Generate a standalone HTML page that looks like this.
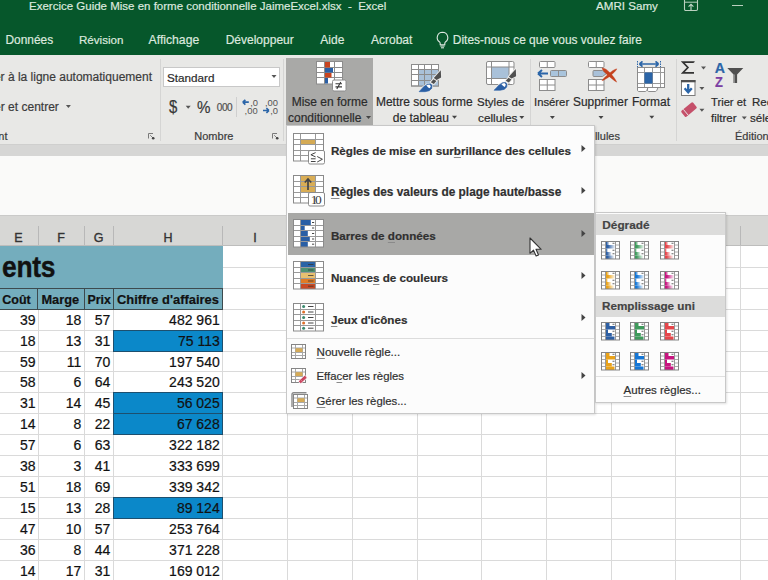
<!DOCTYPE html><html><head><meta charset="utf-8"><style>
html,body{margin:0;padding:0;}
body{width:768px;height:580px;overflow:hidden;position:relative;background:#fafaf9;font-family:"Liberation Sans", sans-serif;}
u{text-decoration:underline;text-decoration-thickness:1px;text-underline-offset:2px;text-decoration-color:#8a8a8a;}
.t{position:absolute;white-space:pre;-webkit-text-stroke:0.2px currentColor;}
</style></head><body><div style="position:absolute;left:0px;top:0px;width:768px;height:55px;background:#06572b"></div><div class="t" style="left:29px;top:1.41px;font-size:11.5px;line-height:11.5px;font-weight:400;color:#dce8df;">Exercice Guide Mise en forme conditionnelle JaimeExcel.xlsx  -  Excel</div><div class="t" style="left:596px;top:0.40px;font-size:11.6px;line-height:11.6px;font-weight:400;color:#dce8df;">AMRI Samy</div><svg style="position:absolute;left:683px;top:0px;" width="16" height="12" viewBox="0 0 16 12"><rect x="1.5" y="-2" width="13" height="12.5" rx="1.2" fill="none" stroke="#b9d0bf" stroke-width="1.1"/><line x1="1.5" y1="2.2" x2="14.5" y2="2.2" stroke="#b9d0bf"/><path d="M8 10.5V4.3M5.6 6.6L8 4.2L10.4 6.6" fill="none" stroke="#c8dacd" stroke-width="1.1"/></svg><div style="position:absolute;left:732px;top:5px;width:11px;height:1.2px;background:#b9d0bf"></div><div class="t" style="left:5.5px;top:35.31px;font-size:11.9px;line-height:11.9px;font-weight:400;color:#dce8df;">Données</div><div class="t" style="left:79px;top:34.31px;font-size:11.6px;line-height:11.6px;font-weight:400;color:#dce8df;">Révision</div><div class="t" style="left:148.6px;top:34.30px;font-size:12.2px;line-height:12.2px;font-weight:400;color:#dce8df;">Affichage</div><div class="t" style="left:225.7px;top:34.32px;font-size:12px;line-height:12px;font-weight:400;color:#dce8df;">Développeur</div><div class="t" style="left:320.3px;top:34.32px;font-size:12px;line-height:12px;font-weight:400;color:#dce8df;">Aide</div><div class="t" style="left:371px;top:34.32px;font-size:12px;line-height:12px;font-weight:400;color:#dce8df;">Acrobat</div><svg style="position:absolute;left:435px;top:31px;" width="15" height="18" viewBox="0 0 15 18"><path d="M7.5 1.2a5.3 5.3 0 0 0-3.2 9.5c.6.5.9 1.1.9 1.8v1.3h4.6v-1.3c0-.7.3-1.3.9-1.8a5.3 5.3 0 0 0-3.2-9.5z" fill="none" stroke="#dfe9e2" stroke-width="1.1"/><line x1="5.3" y1="15" x2="9.7" y2="15" stroke="#dfe9e2" stroke-width="1.1"/><line x1="6" y1="16.8" x2="9" y2="16.8" stroke="#dfe9e2" stroke-width="1.1"/></svg><div class="t" style="left:452.8px;top:35.31px;font-size:11.95px;line-height:11.95px;font-weight:400;color:#dce8df;">Dites-nous ce que vous voulez faire</div><div style="position:absolute;left:0px;top:55px;width:768px;height:89px;background:#e8e8e6"></div><div style="position:absolute;left:0px;top:144px;width:768px;height:1px;background:#cfcfce"></div><div style="position:absolute;left:0px;top:145px;width:768px;height:11px;background:#d6d6d5"></div><div class="t" style="right:616px;top:71.32px;font-size:12px;line-height:12px;font-weight:400;color:#3b3b3b;">Renvoyer à la ligne automatiquement</div><div class="t" style="right:709.2px;top:100.82px;font-size:12px;line-height:12px;font-weight:400;color:#3b3b3b;">Fusionner et centrer</div><svg style="position:absolute;left:65px;top:104px;" width="7" height="5" viewBox="0 0 7 5"><path d="M0.90 1.10h5l-2.5 3z" fill="#555"/></svg><div class="t" style="right:760.5px;top:130.50px;font-size:11px;line-height:11px;font-weight:400;color:#3b3b3b;">Alignement</div><svg style="position:absolute;left:147px;top:132px;" width="8" height="8" viewBox="0 0 8 8"><path d="M1.5 6.5V1.5H6" fill="none" stroke="#7a7a7a" stroke-width="1"/><path d="M3.2 3.2L6 6" stroke="#777" stroke-width="0.9"/><circle cx="6.2" cy="6.2" r="1.3" fill="#444"/></svg><div style="position:absolute;left:160px;top:59px;width:1px;height:82px;background:#d5d5d4"></div><div style="position:absolute;left:163px;top:67px;width:117px;height:20px;background:#fff;box-sizing:border-box;border:1px solid #c8c8c8"></div><div class="t" style="left:167px;top:72.00px;font-size:11.7px;line-height:11.7px;font-weight:400;color:#2b2b2b;">Standard</div><svg style="position:absolute;left:271px;top:74px;" width="7" height="5" viewBox="0 0 7 5"><path d="M0.50 0.90h5l-2.5 3z" fill="#555"/></svg><div class="t" style="left:169.3px;top:98.61px;font-size:17.5px;line-height:17.5px;font-weight:400;color:#383838;transform:scaleX(0.85);transform-origin:0 0;">$</div><svg style="position:absolute;left:185px;top:105px;" width="7" height="5" viewBox="0 0 7 5"><path d="M0.70 0.80h5l-2.5 3z" fill="#555"/></svg><div class="t" style="left:196.5px;top:99.02px;font-size:16.5px;line-height:16.5px;font-weight:400;color:#383838;transform:scaleX(0.92);transform-origin:0 0;">%</div><div class="t" style="left:216.8px;top:102.61px;font-size:10px;line-height:10px;font-weight:400;color:#505050;letter-spacing:-0.4px;">000</div><svg style="position:absolute;left:241px;top:97px;" width="18" height="20" viewBox="0 0 18 20"><text x="9.2" y="8.9" font-family="Liberation Sans" font-size="9.4" fill="#555">,0</text><text x="3.6" y="16.9" font-family="Liberation Sans" font-size="9.4" fill="#555">,00</text><path d="M1.8 5.2h6M1.8 5.2l2.6-2.4M1.8 5.2l2.6 2.4" fill="none" stroke="#2b65a8" stroke-width="1.7"/></svg><svg style="position:absolute;left:261px;top:97px;" width="18" height="20" viewBox="0 0 18 20"><text x="4" y="8.9" font-family="Liberation Sans" font-size="9.4" fill="#555">,00</text><text x="9.2" y="16.9" font-family="Liberation Sans" font-size="9.4" fill="#555">,0</text><path d="M2 13.5h6M8 13.5l-2.6-2.4M8 13.5l-2.6 2.4" fill="none" stroke="#2b65a8" stroke-width="1.7"/></svg><div style="position:absolute;left:236px;top:97px;width:1px;height:20px;background:#cfcfcf"></div><div class="t" style="left:194.3px;top:130.80px;font-size:11px;line-height:11px;font-weight:400;color:#3b3b3b;">Nombre</div><svg style="position:absolute;left:271px;top:132px;" width="8" height="8" viewBox="0 0 8 8"><path d="M1.5 6.5V1.5H6" fill="none" stroke="#7a7a7a" stroke-width="1"/><path d="M3.2 3.2L6 6" stroke="#777" stroke-width="0.9"/><circle cx="6.2" cy="6.2" r="1.3" fill="#444"/></svg><div style="position:absolute;left:283px;top:59px;width:1px;height:82px;background:#d5d5d4"></div><div style="position:absolute;left:286px;top:58px;width:87px;height:67px;background:#a9a9a7"></div><svg style="position:absolute;left:316px;top:61px;" width="31" height="32" viewBox="0 0 31 32"><rect x="0.5" y="0.5" width="26" height="22.5" fill="#fff" stroke="#8c8c8c"/><line x1="0.5" y1="6.5" x2="26.5" y2="6.5" stroke="#8c8c8c"/><line x1="0.5" y1="11.5" x2="26.5" y2="11.5" stroke="#8c8c8c"/><line x1="0.5" y1="16.5" x2="26.5" y2="16.5" stroke="#8c8c8c"/><line x1="8.5" y1="0.5" x2="8.5" y2="23" stroke="#8c8c8c"/><line x1="18.5" y1="0.5" x2="18.5" y2="23" stroke="#8c8c8c"/><rect x="9" y="1" width="5" height="5.5" fill="#c9441f"/><rect x="9" y="7" width="8" height="4.5" fill="#2a5fa5"/><rect x="9" y="12" width="6.5" height="4.5" fill="#c9441f"/><rect x="9" y="17" width="3" height="5.5" fill="#2a5fa5"/><rect x="16.5" y="19" width="13.5" height="11" rx="1.5" fill="#fff" stroke="#8c8c8c"/><path d="M19.5 22.8h6.5M19.5 25.9h6.5M24.8 21l-4 7" stroke="#3a3a3a" stroke-width="1.1" fill="none"/></svg><div class="t" style="left:291.7px;top:95.82px;font-size:12px;line-height:12px;font-weight:400;color:#2b2b2b;">Mise en forme</div><div class="t" style="left:288px;top:112.32px;font-size:12px;line-height:12px;font-weight:400;color:#2b2b2b;">conditionnelle</div><svg style="position:absolute;left:365px;top:115px;" width="7" height="5" viewBox="0 0 7 5"><path d="M1.00 1.00h5l-2.5 3z" fill="#444"/></svg><svg style="position:absolute;left:410px;top:63px;" width="34" height="30" viewBox="0 0 34 30"><rect x="1.5" y="1.5" width="27" height="21.5" fill="#fff" stroke="#8c8c8c"/><rect x="8.5" y="6.5" width="20" height="16.5" fill="#a9c1d9"/><line x1="1.5" y1="6.5" x2="28.5" y2="6.5" stroke="#8c8c8c"/><line x1="1.5" y1="11.5" x2="28.5" y2="11.5" stroke="#8c8c8c"/><line x1="1.5" y1="17.5" x2="28.5" y2="17.5" stroke="#8c8c8c"/><line x1="8.5" y1="1.5" x2="8.5" y2="23" stroke="#8c8c8c"/><line x1="14.5" y1="1.5" x2="14.5" y2="23" stroke="#8c8c8c"/><line x1="21.5" y1="1.5" x2="21.5" y2="23" stroke="#8c8c8c"/><rect x="1.5" y="1.5" width="27" height="21.5" fill="none" stroke="#8c8c8c"/><path d="M30.80 7.30 L31.10 14.54 L26.55 16.90 L23.84 15.10Z M23.50 16.20 L26.40 17.90 L23.84 20.90 L20.80 19.20Z M9.05 28.70 L13.90 23.55 L17.50 21.14 L20.52 20.84 L22.03 22.35 L21.73 25.36 L19.31 27.78 L15.09 28.70Z" fill="none" stroke="#ececeb" stroke-width="2" stroke-linejoin="round"/><path d="M30.80 7.30 L31.10 14.54 L26.55 16.90 L23.84 15.10Z" fill="#505050"/><path d="M23.50 16.20 L26.40 17.90 L23.84 20.90 L20.80 19.20Z" fill="#505050"/><path d="M9.05 28.70 L13.90 23.55 L17.50 21.14 L20.52 20.84 L22.03 22.35 L21.73 25.36 L19.31 27.78 L15.09 28.70Z" fill="#2a5fa5" stroke="#2a5fa5" stroke-width="0.6" stroke-linejoin="round"/><path d="M16.30 22.35 L19.30 21.44 L20.80 22.95 L19.90 25.36 L18.10 24.46Z" fill="#fff"/></svg><div class="t" style="left:375.9px;top:95.82px;font-size:12px;line-height:12px;font-weight:400;color:#2b2b2b;">Mettre sous forme</div><div class="t" style="left:392.8px;top:112.32px;font-size:12px;line-height:12px;font-weight:400;color:#2b2b2b;">de tableau</div><svg style="position:absolute;left:451px;top:115px;" width="7" height="5" viewBox="0 0 7 5"><path d="M1.00 0.80h5l-2.5 3z" fill="#444"/></svg><svg style="position:absolute;left:485px;top:61px;" width="34" height="32" viewBox="0 0 34 32"><rect x="1.5" y="0.5" width="27.5" height="23" rx="1.5" fill="#fff" stroke="#8c8c8c"/><rect x="6.5" y="6" width="17.5" height="11.5" fill="#a9c1d9"/><line x1="1.5" y1="6" x2="29" y2="6" stroke="#8c8c8c"/><line x1="1.5" y1="17.5" x2="29" y2="17.5" stroke="#8c8c8c"/><line x1="6.5" y1="0.5" x2="6.5" y2="23.5" stroke="#8c8c8c"/><line x1="24" y1="0.5" x2="24" y2="23.5" stroke="#8c8c8c"/><path d="M30.80 7.90 L31.10 15.14 L26.55 17.50 L23.84 15.70Z M23.50 16.80 L26.40 18.50 L23.84 21.50 L20.80 19.80Z M9.05 29.30 L13.90 24.15 L17.50 21.74 L20.52 21.44 L22.03 22.95 L21.73 25.96 L19.31 28.38 L15.09 29.30Z" fill="none" stroke="#ececeb" stroke-width="2" stroke-linejoin="round"/><path d="M30.80 7.90 L31.10 15.14 L26.55 17.50 L23.84 15.70Z" fill="#505050"/><path d="M23.50 16.80 L26.40 18.50 L23.84 21.50 L20.80 19.80Z" fill="#505050"/><path d="M9.05 29.30 L13.90 24.15 L17.50 21.74 L20.52 21.44 L22.03 22.95 L21.73 25.96 L19.31 28.38 L15.09 29.30Z" fill="#2a5fa5" stroke="#2a5fa5" stroke-width="0.6" stroke-linejoin="round"/><path d="M16.30 22.95 L19.30 22.04 L20.80 23.55 L19.90 25.96 L18.10 25.06Z" fill="#fff"/></svg><div class="t" style="left:477px;top:96.80px;font-size:11.5px;line-height:11.5px;font-weight:400;color:#2b2b2b;">Styles de</div><div class="t" style="left:478px;top:113.31px;font-size:11.8px;line-height:11.8px;font-weight:400;color:#2b2b2b;">cellules</div><svg style="position:absolute;left:518px;top:115px;" width="7" height="5" viewBox="0 0 7 5"><path d="M1.30 1.00h5l-2.5 3z" fill="#444"/></svg><div style="position:absolute;left:529.5px;top:59px;width:1px;height:82px;background:#d5d5d4"></div><svg style="position:absolute;left:536.5px;top:61px;" width="31" height="31" viewBox="0 0 31 31"><rect x="2.5" y="0.5" width="15.5" height="6" rx="1" fill="#fff" stroke="#8c8c8c"/><line x1="10.25" y1="0.5" x2="10.25" y2="6.5" stroke="#8c8c8c"/><rect x="13.5" y="9.5" width="16" height="6" rx="1" fill="#a9c4dc" stroke="#8c8c8c"/><line x1="21.5" y1="9.5" x2="21.5" y2="15.5" stroke="#8c8c8c"/><path d="M1 12.5h10M1 12.5l4-3.5M1 12.5l4 3.5" fill="none" stroke="#2b65a8" stroke-width="2"/><rect x="2.5" y="18.5" width="15.5" height="11" fill="#fff" stroke="#8c8c8c"/><line x1="10.25" y1="18.5" x2="10.25" y2="29.5" stroke="#8c8c8c"/><line x1="2.5" y1="24" x2="18" y2="24" stroke="#8c8c8c"/></svg><div class="t" style="left:534px;top:96.82px;font-size:11.3px;line-height:11.3px;font-weight:400;color:#2b2b2b;">Insérer</div><svg style="position:absolute;left:549px;top:115px;" width="7" height="5" viewBox="0 0 7 5"><path d="M0.90 1.00h5l-2.5 3z" fill="#444"/></svg><svg style="position:absolute;left:587px;top:61px;" width="32" height="31" viewBox="0 0 32 31"><rect x="1.5" y="0.5" width="15.5" height="6" rx="1" fill="#fff" stroke="#8c8c8c"/><line x1="9.25" y1="0.5" x2="9.25" y2="6.5" stroke="#8c8c8c"/><path d="M7 9.5h8.5l4 3l-4 3h-8.5q-1 0-1-1v-4q0-1 1-1z" fill="#a9c1d9" stroke="#8c8c8c"/><rect x="1.5" y="18.5" width="15.5" height="11" fill="#fff" stroke="#8c8c8c"/><line x1="9.25" y1="18.5" x2="9.25" y2="29.5" stroke="#8c8c8c"/><line x1="1.5" y1="24" x2="17" y2="24" stroke="#8c8c8c"/><path d="M15 7C17.5 6.6 20.5 9 23.5 12.3C26.3 15.4 28.6 18.4 29.8 21.2C27 19.6 24 17 21 14.4C18 11.8 15.6 9.6 15 7Z" fill="#c4421e" stroke="#c4421e" stroke-width="0.3"/><path d="M30 7.8C28 7.9 25 10 22 12.5C19 15 16.2 17.6 14.9 19.8C17.2 19.2 20.2 17.2 23.2 14.9C26.2 12.5 28.8 10 30 7.8Z" fill="#c4421e" stroke="#c4421e" stroke-width="0.3"/></svg><div class="t" style="left:573px;top:96.81px;font-size:11.9px;line-height:11.9px;font-weight:400;color:#2b2b2b;">Supprimer</div><svg style="position:absolute;left:598px;top:115px;" width="7" height="5" viewBox="0 0 7 5"><path d="M0.50 1.00h5l-2.5 3z" fill="#444"/></svg><svg style="position:absolute;left:637px;top:61px;" width="29" height="32" viewBox="0 0 29 32"><path d="M0.5 0v6M23.5 0v6" stroke="#2b65a8" stroke-width="1" stroke-dasharray="1.5 1"/><path d="M2.5 3h19M2.5 3l3-2.6M2.5 3l3 2.6M21.5 3l-3-2.6M21.5 3l-3 2.6" fill="none" stroke="#2b65a8" stroke-width="1.7"/><path d="M0.5 26.5v2.5c0 1 .5 1.5 1.5 1.5h6c1 0 1.5-.5 2-1.5l1-2.5M10.5 26.5v2.5c0 1 .5 1.5 1.5 1.5h6c1 0 1.5-.5 2-1.5l1-2.5" fill="#fff" stroke="#8c8c8c"/><rect x="0.5" y="6.5" width="27" height="20" fill="#fff" stroke="#8c8c8c"/><line x1="0.5" y1="11.5" x2="27.5" y2="11.5" stroke="#999"/><line x1="0.5" y1="22.5" x2="27.5" y2="22.5" stroke="#999"/><line x1="7.5" y1="6.5" x2="7.5" y2="26.5" stroke="#999"/><line x1="15.5" y1="6.5" x2="15.5" y2="26.5" stroke="#999"/><line x1="23.5" y1="6.5" x2="23.5" y2="26.5" stroke="#999"/><rect x="7.5" y="11.5" width="8" height="11" fill="#2b65a8"/><rect x="0.5" y="6.5" width="27" height="20" fill="none" stroke="#8c8c8c"/></svg><div class="t" style="left:632px;top:95.82px;font-size:12px;line-height:12px;font-weight:400;color:#2b2b2b;">Format</div><svg style="position:absolute;left:648px;top:115px;" width="7" height="5" viewBox="0 0 7 5"><path d="M1.30 0.80h5l-2.5 3z" fill="#444"/></svg><div class="t" style="right:148px;top:130.50px;font-size:11px;line-height:11px;font-weight:400;color:#3b3b3b;">Cellules</div><div style="position:absolute;left:675.5px;top:59px;width:1px;height:82px;background:#d5d5d4"></div><svg style="position:absolute;left:681px;top:60px;" width="15" height="15" viewBox="0 0 15 15"><path d="M12.8 2.3V2.2H1.8L6.9 7.5L1.8 12.8H13" fill="none" stroke="#333" stroke-width="1.7" stroke-linejoin="miter"/></svg><svg style="position:absolute;left:700px;top:66px;" width="7" height="5" viewBox="0 0 7 5"><path d="M1.00 0.50h5l-2.5 3z" fill="#555"/></svg><svg style="position:absolute;left:681px;top:80px;" width="16" height="17" viewBox="0 0 16 17"><rect x="0.5" y="0.5" width="13.5" height="15" fill="#fff" stroke="#7a7a7a"/><rect x="0" y="0" width="14.5" height="2.3" fill="#505050"/><path d="M7.2 4v8.3M3.6 8.3l3.6 3.9l3.6-3.9" fill="none" stroke="#2b65a8" stroke-width="2.3"/></svg><svg style="position:absolute;left:698px;top:86px;" width="7" height="5" viewBox="0 0 7 5"><path d="M1.40 1.10h5l-2.5 3z" fill="#555"/></svg><svg style="position:absolute;left:680px;top:101px;" width="18" height="17" viewBox="0 0 18 17"><g transform="translate(9,8.6) rotate(-40)"><rect x="-7.6" y="-3.9" width="15.2" height="7.8" rx="1.4" fill="#c5506a"/><line x1="-4.2" y1="-3.9" x2="-4.2" y2="3.9" stroke="#e8e8e6" stroke-width="0.9"/></g></svg><svg style="position:absolute;left:698px;top:108px;" width="7" height="5" viewBox="0 0 7 5"><path d="M1.40 0.80h5l-2.5 3z" fill="#555"/></svg><div class="t" style="left:714.8px;top:60.90px;font-size:14.2px;line-height:14.2px;font-weight:700;color:#2b65a8;">A</div><div class="t" style="left:715.3px;top:74.42px;font-size:15.2px;line-height:15.2px;font-weight:700;color:#7b3fa3;transform:scaleX(0.85);transform-origin:0 0;">Z</div><svg style="position:absolute;left:727px;top:67px;" width="17" height="17" viewBox="0 0 17 17"><path d="M0.3 1h16l-6.2 6.5v8.6h-3.6v-8.6z" fill="#505050"/><path d="M6.5 7.5v8.6h1.3v-8.6z" fill="#9a9a9a"/></svg><div class="t" style="left:711px;top:97.20px;font-size:11.2px;line-height:11.2px;font-weight:400;color:#2b2b2b;">Trier et</div><div class="t" style="left:711px;top:113.11px;font-size:11.5px;line-height:11.5px;font-weight:400;color:#2b2b2b;">filtrer</div><svg style="position:absolute;left:741px;top:116px;" width="7" height="5" viewBox="0 0 7 5"><path d="M0.80 0.50h5l-2.5 3z" fill="#555"/></svg><div class="t" style="left:752px;top:97.20px;font-size:11.5px;line-height:11.5px;font-weight:400;color:#2b2b2b;">Rechercher et</div><div class="t" style="left:750px;top:113.11px;font-size:11.5px;line-height:11.5px;font-weight:400;color:#2b2b2b;">sélectionner</div><div class="t" style="left:735px;top:130.50px;font-size:11px;line-height:11px;font-weight:400;color:#3b3b3b;">Édition</div><div style="position:absolute;left:0px;top:156px;width:768px;height:58px;background:#fafaf9"></div><div style="position:absolute;left:0px;top:215px;width:768px;height:31px;background:#d7d7d5"></div><div style="position:absolute;left:0px;top:215px;width:768px;height:1px;background:#cacac9"></div><div style="position:absolute;left:0px;top:245px;width:768px;height:1px;background:#bdbdbc"></div><div style="position:absolute;left:38px;top:226px;width:1px;height:19px;background:#b8b8b8"></div><div style="position:absolute;left:84px;top:226px;width:1px;height:19px;background:#b8b8b8"></div><div style="position:absolute;left:113px;top:226px;width:1px;height:19px;background:#b8b8b8"></div><div style="position:absolute;left:222px;top:226px;width:1px;height:19px;background:#b8b8b8"></div><div style="position:absolute;left:287px;top:226px;width:1px;height:19px;background:#b8b8b8"></div><div style="position:absolute;left:352px;top:226px;width:1px;height:19px;background:#b8b8b8"></div><div style="position:absolute;left:417px;top:226px;width:1px;height:19px;background:#b8b8b8"></div><div style="position:absolute;left:481px;top:226px;width:1px;height:19px;background:#b8b8b8"></div><div style="position:absolute;left:546px;top:226px;width:1px;height:19px;background:#b8b8b8"></div><div style="position:absolute;left:611px;top:226px;width:1px;height:19px;background:#b8b8b8"></div><div style="position:absolute;left:675px;top:226px;width:1px;height:19px;background:#b8b8b8"></div><div style="position:absolute;left:740px;top:226px;width:1px;height:19px;background:#b8b8b8"></div><div class="t" style="left:-281.5px;width:600px;text-align:center;top:231.51px;font-size:12.5px;line-height:12.5px;font-weight:400;color:#333;-webkit-text-stroke:0.35px #333;">E</div><div class="t" style="left:-239px;width:600px;text-align:center;top:231.51px;font-size:12.5px;line-height:12.5px;font-weight:400;color:#333;-webkit-text-stroke:0.35px #333;">F</div><div class="t" style="left:-201.5px;width:600px;text-align:center;top:231.51px;font-size:12.5px;line-height:12.5px;font-weight:400;color:#333;-webkit-text-stroke:0.35px #333;">G</div><div class="t" style="left:-132px;width:600px;text-align:center;top:231.51px;font-size:12.5px;line-height:12.5px;font-weight:400;color:#333;-webkit-text-stroke:0.35px #333;">H</div><div class="t" style="left:-45px;width:600px;text-align:center;top:231.51px;font-size:12.5px;line-height:12.5px;font-weight:400;color:#333;-webkit-text-stroke:0.35px #333;">I</div><div class="t" style="left:20px;width:600px;text-align:center;top:231.51px;font-size:12.5px;line-height:12.5px;font-weight:400;color:#333;-webkit-text-stroke:0.35px #333;">J</div><div class="t" style="left:85px;width:600px;text-align:center;top:231.51px;font-size:12.5px;line-height:12.5px;font-weight:400;color:#333;-webkit-text-stroke:0.35px #333;">K</div><div class="t" style="left:149px;width:600px;text-align:center;top:231.51px;font-size:12.5px;line-height:12.5px;font-weight:400;color:#333;-webkit-text-stroke:0.35px #333;">L</div><div class="t" style="left:214px;width:600px;text-align:center;top:231.51px;font-size:12.5px;line-height:12.5px;font-weight:400;color:#333;-webkit-text-stroke:0.35px #333;">M</div><div class="t" style="left:279px;width:600px;text-align:center;top:231.51px;font-size:12.5px;line-height:12.5px;font-weight:400;color:#333;-webkit-text-stroke:0.35px #333;">N</div><div class="t" style="left:343px;width:600px;text-align:center;top:231.51px;font-size:12.5px;line-height:12.5px;font-weight:400;color:#333;-webkit-text-stroke:0.35px #333;">O</div><div class="t" style="left:407px;width:600px;text-align:center;top:231.51px;font-size:12.5px;line-height:12.5px;font-weight:400;color:#333;-webkit-text-stroke:0.35px #333;">P</div><div style="position:absolute;left:0px;top:246px;width:768px;height:334px;background:#fff"></div><div style="position:absolute;left:0px;top:267px;width:768px;height:1px;background:#dadada"></div><div style="position:absolute;left:0px;top:288px;width:768px;height:1px;background:#dadada"></div><div style="position:absolute;left:0px;top:309px;width:768px;height:1px;background:#dadada"></div><div style="position:absolute;left:0px;top:330px;width:768px;height:1px;background:#dadada"></div><div style="position:absolute;left:0px;top:351px;width:768px;height:1px;background:#dadada"></div><div style="position:absolute;left:0px;top:371px;width:768px;height:1px;background:#dadada"></div><div style="position:absolute;left:0px;top:392px;width:768px;height:1px;background:#dadada"></div><div style="position:absolute;left:0px;top:413px;width:768px;height:1px;background:#dadada"></div><div style="position:absolute;left:0px;top:434px;width:768px;height:1px;background:#dadada"></div><div style="position:absolute;left:0px;top:455px;width:768px;height:1px;background:#dadada"></div><div style="position:absolute;left:0px;top:476px;width:768px;height:1px;background:#dadada"></div><div style="position:absolute;left:0px;top:497px;width:768px;height:1px;background:#dadada"></div><div style="position:absolute;left:0px;top:518px;width:768px;height:1px;background:#dadada"></div><div style="position:absolute;left:0px;top:539px;width:768px;height:1px;background:#dadada"></div><div style="position:absolute;left:0px;top:560px;width:768px;height:1px;background:#dadada"></div><div style="position:absolute;left:0px;top:581px;width:768px;height:1px;background:#dadada"></div><div style="position:absolute;left:38px;top:246px;width:1px;height:334px;background:#dadada"></div><div style="position:absolute;left:84px;top:246px;width:1px;height:334px;background:#dadada"></div><div style="position:absolute;left:113px;top:246px;width:1px;height:334px;background:#dadada"></div><div style="position:absolute;left:222px;top:246px;width:1px;height:334px;background:#dadada"></div><div style="position:absolute;left:287px;top:246px;width:1px;height:334px;background:#dadada"></div><div style="position:absolute;left:352px;top:246px;width:1px;height:334px;background:#dadada"></div><div style="position:absolute;left:417px;top:246px;width:1px;height:334px;background:#dadada"></div><div style="position:absolute;left:481px;top:246px;width:1px;height:334px;background:#dadada"></div><div style="position:absolute;left:546px;top:246px;width:1px;height:334px;background:#dadada"></div><div style="position:absolute;left:611px;top:246px;width:1px;height:334px;background:#dadada"></div><div style="position:absolute;left:675px;top:246px;width:1px;height:334px;background:#dadada"></div><div style="position:absolute;left:740px;top:246px;width:1px;height:334px;background:#dadada"></div><div style="position:absolute;left:0px;top:246px;width:223px;height:42px;background:#74adbd"></div><div class="t" style="left:1.6px;top:252.01px;font-size:30px;line-height:30px;font-weight:700;color:#111;letter-spacing:-0.3px;transform:scaleX(0.88);transform-origin:0 0;-webkit-text-stroke:0.4px #111;">ents</div><div style="position:absolute;left:0px;top:288px;width:223px;height:22px;background:#74adbd"></div><div style="position:absolute;left:0px;top:288px;width:223px;height:1px;background:#3d4a4e"></div><div style="position:absolute;left:0px;top:309px;width:223px;height:1px;background:#3d4a4e"></div><div style="position:absolute;left:37px;top:288px;width:1px;height:22px;background:#3d4a4e"></div><div style="position:absolute;left:84px;top:288px;width:1px;height:22px;background:#3d4a4e"></div><div style="position:absolute;left:113px;top:288px;width:1px;height:22px;background:#3d4a4e"></div><div style="position:absolute;left:222px;top:288px;width:1px;height:22px;background:#3d4a4e"></div><div class="t" style="left:2.3px;top:294.41px;font-size:12.5px;line-height:12.5px;font-weight:700;color:#111;">Coût</div><div class="t" style="left:41.4px;top:294.42px;font-size:12.8px;line-height:12.8px;font-weight:700;color:#111;">Marge</div><div class="t" style="left:87.5px;top:294.41px;font-size:12.4px;line-height:12.4px;font-weight:700;color:#111;">Prix</div><div class="t" style="left:117px;top:294.41px;font-size:12.9px;line-height:12.9px;font-weight:700;color:#111;">Chiffre d'affaires</div><div class="t" style="right:732.4px;top:312.70px;font-size:14px;line-height:14px;font-weight:400;color:#111;">39</div><div class="t" style="right:686.7px;top:312.70px;font-size:14px;line-height:14px;font-weight:400;color:#111;">18</div><div class="t" style="right:657.8px;top:312.70px;font-size:14px;line-height:14px;font-weight:400;color:#111;">57</div><div class="t" style="right:548.3px;top:312.70px;font-size:14px;line-height:14px;font-weight:400;color:#111;">482 961</div><div style="position:absolute;left:113px;top:330px;width:110px;height:22px;background:#0b88c9;box-sizing:border-box;border:1px solid #1d4f6e"></div><div class="t" style="right:732.4px;top:333.70px;font-size:14px;line-height:14px;font-weight:400;color:#111;">18</div><div class="t" style="right:686.7px;top:333.70px;font-size:14px;line-height:14px;font-weight:400;color:#111;">13</div><div class="t" style="right:657.8px;top:333.70px;font-size:14px;line-height:14px;font-weight:400;color:#111;">31</div><div class="t" style="right:548.3px;top:333.70px;font-size:14px;line-height:14px;font-weight:400;color:#111;">75 113</div><div class="t" style="right:732.4px;top:354.70px;font-size:14px;line-height:14px;font-weight:400;color:#111;">59</div><div class="t" style="right:686.7px;top:354.70px;font-size:14px;line-height:14px;font-weight:400;color:#111;">11</div><div class="t" style="right:657.8px;top:354.70px;font-size:14px;line-height:14px;font-weight:400;color:#111;">70</div><div class="t" style="right:548.3px;top:354.70px;font-size:14px;line-height:14px;font-weight:400;color:#111;">197 540</div><div class="t" style="right:732.4px;top:374.70px;font-size:14px;line-height:14px;font-weight:400;color:#111;">58</div><div class="t" style="right:686.7px;top:374.70px;font-size:14px;line-height:14px;font-weight:400;color:#111;">6</div><div class="t" style="right:657.8px;top:374.70px;font-size:14px;line-height:14px;font-weight:400;color:#111;">64</div><div class="t" style="right:548.3px;top:374.70px;font-size:14px;line-height:14px;font-weight:400;color:#111;">243 520</div><div style="position:absolute;left:113px;top:392px;width:110px;height:22px;background:#0b88c9;box-sizing:border-box;border:1px solid #1d4f6e"></div><div class="t" style="right:732.4px;top:395.70px;font-size:14px;line-height:14px;font-weight:400;color:#111;">31</div><div class="t" style="right:686.7px;top:395.70px;font-size:14px;line-height:14px;font-weight:400;color:#111;">14</div><div class="t" style="right:657.8px;top:395.70px;font-size:14px;line-height:14px;font-weight:400;color:#111;">45</div><div class="t" style="right:548.3px;top:395.70px;font-size:14px;line-height:14px;font-weight:400;color:#111;">56 025</div><div style="position:absolute;left:113px;top:413px;width:110px;height:22px;background:#0b88c9;box-sizing:border-box;border:1px solid #1d4f6e"></div><div class="t" style="right:732.4px;top:416.70px;font-size:14px;line-height:14px;font-weight:400;color:#111;">14</div><div class="t" style="right:686.7px;top:416.70px;font-size:14px;line-height:14px;font-weight:400;color:#111;">8</div><div class="t" style="right:657.8px;top:416.70px;font-size:14px;line-height:14px;font-weight:400;color:#111;">22</div><div class="t" style="right:548.3px;top:416.70px;font-size:14px;line-height:14px;font-weight:400;color:#111;">67 628</div><div class="t" style="right:732.4px;top:437.70px;font-size:14px;line-height:14px;font-weight:400;color:#111;">57</div><div class="t" style="right:686.7px;top:437.70px;font-size:14px;line-height:14px;font-weight:400;color:#111;">6</div><div class="t" style="right:657.8px;top:437.70px;font-size:14px;line-height:14px;font-weight:400;color:#111;">63</div><div class="t" style="right:548.3px;top:437.70px;font-size:14px;line-height:14px;font-weight:400;color:#111;">322 182</div><div class="t" style="right:732.4px;top:458.70px;font-size:14px;line-height:14px;font-weight:400;color:#111;">38</div><div class="t" style="right:686.7px;top:458.70px;font-size:14px;line-height:14px;font-weight:400;color:#111;">3</div><div class="t" style="right:657.8px;top:458.70px;font-size:14px;line-height:14px;font-weight:400;color:#111;">41</div><div class="t" style="right:548.3px;top:458.70px;font-size:14px;line-height:14px;font-weight:400;color:#111;">333 699</div><div class="t" style="right:732.4px;top:479.70px;font-size:14px;line-height:14px;font-weight:400;color:#111;">51</div><div class="t" style="right:686.7px;top:479.70px;font-size:14px;line-height:14px;font-weight:400;color:#111;">18</div><div class="t" style="right:657.8px;top:479.70px;font-size:14px;line-height:14px;font-weight:400;color:#111;">69</div><div class="t" style="right:548.3px;top:479.70px;font-size:14px;line-height:14px;font-weight:400;color:#111;">339 342</div><div style="position:absolute;left:113px;top:497px;width:110px;height:22px;background:#0b88c9;box-sizing:border-box;border:1px solid #1d4f6e"></div><div class="t" style="right:732.4px;top:500.71px;font-size:14px;line-height:14px;font-weight:400;color:#111;">15</div><div class="t" style="right:686.7px;top:500.71px;font-size:14px;line-height:14px;font-weight:400;color:#111;">13</div><div class="t" style="right:657.8px;top:500.71px;font-size:14px;line-height:14px;font-weight:400;color:#111;">28</div><div class="t" style="right:548.3px;top:500.71px;font-size:14px;line-height:14px;font-weight:400;color:#111;">89 124</div><div class="t" style="right:732.4px;top:521.71px;font-size:14px;line-height:14px;font-weight:400;color:#111;">47</div><div class="t" style="right:686.7px;top:521.71px;font-size:14px;line-height:14px;font-weight:400;color:#111;">10</div><div class="t" style="right:657.8px;top:521.71px;font-size:14px;line-height:14px;font-weight:400;color:#111;">57</div><div class="t" style="right:548.3px;top:521.71px;font-size:14px;line-height:14px;font-weight:400;color:#111;">253 764</div><div class="t" style="right:732.4px;top:542.71px;font-size:14px;line-height:14px;font-weight:400;color:#111;">36</div><div class="t" style="right:686.7px;top:542.71px;font-size:14px;line-height:14px;font-weight:400;color:#111;">8</div><div class="t" style="right:657.8px;top:542.71px;font-size:14px;line-height:14px;font-weight:400;color:#111;">44</div><div class="t" style="right:548.3px;top:542.71px;font-size:14px;line-height:14px;font-weight:400;color:#111;">371 228</div><div class="t" style="right:732.4px;top:563.71px;font-size:14px;line-height:14px;font-weight:400;color:#111;">14</div><div class="t" style="right:686.7px;top:563.71px;font-size:14px;line-height:14px;font-weight:400;color:#111;">17</div><div class="t" style="right:657.8px;top:563.71px;font-size:14px;line-height:14px;font-weight:400;color:#111;">31</div><div class="t" style="right:548.3px;top:563.71px;font-size:14px;line-height:14px;font-weight:400;color:#111;">169 012</div><div style="position:absolute;left:286px;top:125px;width:309px;height:289px;background:#fcfcfc;box-sizing:border-box;border:1px solid #c8c8c8;box-shadow:1px 1px 2px rgba(0,0,0,0.12)"></div><div style="position:absolute;left:288px;top:213px;width:306px;height:42px;background:#a8a8a6"></div><svg style="position:absolute;left:293px;top:133px;" width="33" height="32" viewBox="0 0 33 32"><rect x="0.5" y="0.5" width="30" height="27.5" fill="#fff"/><rect x="7.5" y="6.5" width="15.0" height="5.0" fill="#d4aa55"/><line x1="0.5" y1="6.5" x2="30.5" y2="6.5" stroke="#999999"/><line x1="0.5" y1="11.5" x2="30.5" y2="11.5" stroke="#999999"/><line x1="0.5" y1="17.5" x2="30.5" y2="17.5" stroke="#999999"/><line x1="0.5" y1="22.5" x2="30.5" y2="22.5" stroke="#999999"/><line x1="7.5" y1="0.5" x2="7.5" y2="28.0" stroke="#999999"/><line x1="22.5" y1="0.5" x2="22.5" y2="28.0" stroke="#999999"/><rect x="0.5" y="0.5" width="30" height="27.5" fill="none" stroke="#8a8a8a"/><rect x="15.5" y="17.5" width="16" height="13.5" rx="1.5" fill="#fff" stroke="#8a8a8a"/><path d="M22.6 19.6l-4.7 2.15l4.7 2.15M17.9 25.8h4.7M17.9 28.5h4.7M24.2 23.5l5.2 2.75l-5.2 2.75" fill="none" stroke="#444" stroke-width="1"/></svg><div class="t" style="left:330.9px;top:145.01px;font-size:11.65px;line-height:11.65px;font-weight:700;color:#303030;">Règles de mise en sur<u>b</u>rillance des cellules</div><svg style="position:absolute;left:581px;top:145.0px;" width="5" height="7" viewBox="0 0 5 7"><path d="M0.5 0l4 3.5l-4 3.5z" fill="#444"/></svg><svg style="position:absolute;left:293px;top:175px;" width="33" height="32" viewBox="0 0 33 32"><rect x="0.5" y="0.5" width="30" height="27.5" fill="#fff"/><rect x="7.5" y="0.5" width="15.0" height="6.0" fill="#d9ad55"/><rect x="7.5" y="6.5" width="15.0" height="5.0" fill="#d9ad55"/><rect x="7.5" y="11.5" width="15.0" height="6.0" fill="#d9ad55"/><line x1="0.5" y1="6.5" x2="30.5" y2="6.5" stroke="#999999"/><line x1="0.5" y1="11.5" x2="30.5" y2="11.5" stroke="#999999"/><line x1="0.5" y1="17.5" x2="30.5" y2="17.5" stroke="#999999"/><line x1="0.5" y1="22.5" x2="30.5" y2="22.5" stroke="#999999"/><line x1="7.5" y1="0.5" x2="7.5" y2="28.0" stroke="#999999"/><line x1="22.5" y1="0.5" x2="22.5" y2="28.0" stroke="#999999"/><rect x="0.5" y="0.5" width="30" height="27.5" fill="none" stroke="#8a8a8a"/><path d="M15 15V4M11.8 7.5l3.2-3.5l3.2 3.5" fill="none" stroke="#444" stroke-width="1.7"/><rect x="15.5" y="17.5" width="16" height="13.5" rx="1.5" fill="#fff" stroke="#8a8a8a"/><text x="17.8" y="29.2" font-family="Liberation Serif" font-size="13.5" fill="#3a3a3a" textLength="11">10</text></svg><div class="t" style="left:330.9px;top:186.91px;font-size:11.85px;line-height:11.85px;font-weight:700;color:#303030;"><u>R</u>ègles des valeurs de plage haute/basse</div><svg style="position:absolute;left:581px;top:186.5px;" width="5" height="7" viewBox="0 0 5 7"><path d="M0.5 0l4 3.5l-4 3.5z" fill="#444"/></svg><svg style="position:absolute;left:293px;top:219px;" width="33" height="32" viewBox="0 0 33 32"><rect x="0.5" y="0.5" width="30" height="27.5" fill="#fff"/><rect x="7.5" y="0.5" width="10.3" height="6.0" fill="#2a5fa5"/><line x1="19" y1="3.5" x2="21.2" y2="3.5" stroke="#444" stroke-width="1"/><rect x="7.5" y="6.5" width="4.199999999999999" height="5.0" fill="#2a5fa5"/><line x1="19" y1="9.0" x2="21.2" y2="9.0" stroke="#444" stroke-width="1"/><rect x="7.5" y="11.5" width="7.300000000000001" height="6.0" fill="#2a5fa5"/><line x1="19" y1="14.5" x2="21.2" y2="14.5" stroke="#444" stroke-width="1"/><rect x="7.5" y="17.5" width="9.3" height="5.0" fill="#2a5fa5"/><line x1="19" y1="20.0" x2="21.2" y2="20.0" stroke="#444" stroke-width="1"/><rect x="7.5" y="22.5" width="7.300000000000001" height="5.5" fill="#2a5fa5"/><line x1="19" y1="25.2" x2="21.2" y2="25.2" stroke="#444" stroke-width="1"/><line x1="0.5" y1="6.5" x2="30.5" y2="6.5" stroke="#999999"/><line x1="0.5" y1="11.5" x2="30.5" y2="11.5" stroke="#999999"/><line x1="0.5" y1="17.5" x2="30.5" y2="17.5" stroke="#999999"/><line x1="0.5" y1="22.5" x2="30.5" y2="22.5" stroke="#999999"/><line x1="7.5" y1="0.5" x2="7.5" y2="28.0" stroke="#999999"/><line x1="22.5" y1="0.5" x2="22.5" y2="28.0" stroke="#999999"/><rect x="0.5" y="0.5" width="30" height="27.5" fill="none" stroke="#8a8a8a"/></svg><div class="t" style="left:330.9px;top:229.51px;font-size:11.65px;line-height:11.65px;font-weight:700;color:#303030;">Barres de <u>d</u>onnées</div><svg style="position:absolute;left:581px;top:230.0px;" width="5" height="7" viewBox="0 0 5 7"><path d="M0.5 0l4 3.5l-4 3.5z" fill="#444"/></svg><svg style="position:absolute;left:293px;top:261px;" width="33" height="32" viewBox="0 0 33 32"><rect x="0.5" y="0.5" width="30" height="27.5" fill="#fff"/><rect x="7.5" y="0.5" width="15.0" height="6.0" fill="#2a63a6"/><line x1="15" y1="3.5" x2="20.5" y2="3.5" stroke="#333" stroke-width="1" opacity="0.75"/><rect x="7.5" y="6.5" width="15.0" height="5.0" fill="#4e9273"/><line x1="15" y1="9.0" x2="20.5" y2="9.0" stroke="#333" stroke-width="1" opacity="0.75"/><rect x="7.5" y="11.5" width="15.0" height="6.0" fill="#e8c070"/><line x1="15" y1="14.5" x2="20.5" y2="14.5" stroke="#333" stroke-width="1" opacity="0.75"/><rect x="7.5" y="17.5" width="15.0" height="5.0" fill="#e07b24"/><line x1="15" y1="20.0" x2="20.5" y2="20.0" stroke="#333" stroke-width="1" opacity="0.75"/><rect x="7.5" y="22.5" width="15.0" height="5.5" fill="#c94a24"/><line x1="15" y1="25.2" x2="20.5" y2="25.2" stroke="#333" stroke-width="1" opacity="0.75"/><line x1="0.5" y1="6.5" x2="30.5" y2="6.5" stroke="#999999"/><line x1="0.5" y1="11.5" x2="30.5" y2="11.5" stroke="#999999"/><line x1="0.5" y1="17.5" x2="30.5" y2="17.5" stroke="#999999"/><line x1="0.5" y1="22.5" x2="30.5" y2="22.5" stroke="#999999"/><line x1="7.5" y1="0.5" x2="7.5" y2="28.0" stroke="#999999"/><line x1="22.5" y1="0.5" x2="22.5" y2="28.0" stroke="#999999"/><rect x="0.5" y="0.5" width="30" height="27.5" fill="none" stroke="#8a8a8a"/></svg><div class="t" style="left:330.9px;top:271.51px;font-size:11.65px;line-height:11.65px;font-weight:700;color:#303030;">Nuance<u>s</u> de couleurs</div><svg style="position:absolute;left:581px;top:272.0px;" width="5" height="7" viewBox="0 0 5 7"><path d="M0.5 0l4 3.5l-4 3.5z" fill="#444"/></svg><svg style="position:absolute;left:293px;top:303px;" width="33" height="32" viewBox="0 0 33 32"><rect x="0.5" y="0.5" width="30" height="27.5" fill="#fff"/><line x1="0.5" y1="6.5" x2="30.5" y2="6.5" stroke="#999999"/><line x1="0.5" y1="11.5" x2="30.5" y2="11.5" stroke="#999999"/><line x1="0.5" y1="17.5" x2="30.5" y2="17.5" stroke="#999999"/><line x1="0.5" y1="22.5" x2="30.5" y2="22.5" stroke="#999999"/><line x1="7.5" y1="0.5" x2="7.5" y2="28.0" stroke="#999999"/><line x1="22.5" y1="0.5" x2="22.5" y2="28.0" stroke="#999999"/><rect x="0.5" y="0.5" width="30" height="27.5" fill="none" stroke="#8a8a8a"/><circle cx="10.6" cy="3.50" r="1.5" fill="#3a8a6e"/><line x1="15" y1="3.5" x2="20.5" y2="3.5" stroke="#444" stroke-width="1"/><circle cx="10.6" cy="9.00" r="1.5" fill="#e0702a"/><line x1="15" y1="9.0" x2="20.5" y2="9.0" stroke="#444" stroke-width="1"/><circle cx="10.6" cy="14.50" r="1.5" fill="#3a8a6e"/><line x1="15" y1="14.5" x2="20.5" y2="14.5" stroke="#444" stroke-width="1"/><circle cx="10.6" cy="20.00" r="1.5" fill="#e0702a"/><line x1="15" y1="20.0" x2="20.5" y2="20.0" stroke="#444" stroke-width="1"/><circle cx="10.6" cy="25.25" r="1.5" fill="#3a8a6e"/><line x1="15" y1="25.2" x2="20.5" y2="25.2" stroke="#444" stroke-width="1"/></svg><div class="t" style="left:330.9px;top:313.51px;font-size:11.65px;line-height:11.65px;font-weight:700;color:#303030;"><u>J</u>eux d'icônes</div><svg style="position:absolute;left:581px;top:314.0px;" width="5" height="7" viewBox="0 0 5 7"><path d="M0.5 0l4 3.5l-4 3.5z" fill="#444"/></svg><div style="position:absolute;left:287px;top:338px;width:307px;height:1px;background:#dcdcdc"></div><svg style="position:absolute;left:291px;top:344px;" width="17" height="17" viewBox="0 0 17 17"><rect x="0.5" y="0.5" width="14" height="14" fill="#fff"/><rect x="4.5" y="4" width="7" height="4.5" fill="#d6ab57"/><line x1="0.5" y1="4" x2="14.5" y2="4" stroke="#a8a8a8"/><line x1="0.5" y1="8.5" x2="14.5" y2="8.5" stroke="#a8a8a8"/><line x1="0.5" y1="11.5" x2="14.5" y2="11.5" stroke="#a8a8a8"/><line x1="4.5" y1="0.5" x2="4.5" y2="14.5" stroke="#a8a8a8"/><line x1="11.5" y1="0.5" x2="11.5" y2="14.5" stroke="#a8a8a8"/><rect x="4.5" y="4.5" width="7" height="3.5" fill="#d6ab57"/><rect x="0.5" y="0.5" width="14" height="14" fill="none" stroke="#858585"/></svg><div class="t" style="left:316.5px;top:346.40px;font-size:11.6px;line-height:11.6px;font-weight:400;color:#303030;"><u>N</u>ouvelle règle...</div><svg style="position:absolute;left:291px;top:368px;" width="17" height="17" viewBox="0 0 17 17"><rect x="0.5" y="0.5" width="14" height="14" fill="#fff"/><rect x="4.5" y="4" width="7" height="4.5" fill="#d6ab57"/><line x1="0.5" y1="4" x2="14.5" y2="4" stroke="#a8a8a8"/><line x1="0.5" y1="8.5" x2="14.5" y2="8.5" stroke="#a8a8a8"/><line x1="0.5" y1="11.5" x2="14.5" y2="11.5" stroke="#a8a8a8"/><line x1="4.5" y1="0.5" x2="4.5" y2="14.5" stroke="#a8a8a8"/><line x1="11.5" y1="0.5" x2="11.5" y2="14.5" stroke="#a8a8a8"/><rect x="4.5" y="4.5" width="7" height="3.5" fill="#d6ab57"/><rect x="0.5" y="0.5" width="14" height="14" fill="none" stroke="#858585"/><path d="M8 12.5l5-4.6c.5-.5 1.1-.5 1.6 0l.9.9c.5.5.5 1.1 0 1.6l-5 4.6c-.5.5-1.1.5-1.6 0l-.9-.9c-.5-.5-.5-1.1 0-1.6z" fill="#c9455f" stroke="#fcfcfc" stroke-width="0.8"/><path d="M9.3 11.4l2.3 2.3" stroke="#e58a9b" stroke-width="0.8"/></svg><div class="t" style="left:316.5px;top:371.21px;font-size:11.35px;line-height:11.35px;font-weight:400;color:#303030;">Effa<u>c</u>er les règles</div><svg style="position:absolute;left:581px;top:371.5px;" width="5" height="7" viewBox="0 0 5 7"><path d="M0.5 0l4 3.5l-4 3.5z" fill="#444"/></svg><svg style="position:absolute;left:291px;top:392px;" width="18" height="18" viewBox="0 0 18 18"><path d="M1 15V2.5Q1 0.8 2.7 0.8H15.5" fill="none" stroke="#8a8a8a" stroke-width="1.4"/><g transform="translate(2,2)"><rect x="0.5" y="0.5" width="14" height="14" fill="#fff"/><rect x="4.5" y="4" width="7" height="4.5" fill="#d6ab57"/><line x1="0.5" y1="4" x2="14.5" y2="4" stroke="#a8a8a8"/><line x1="0.5" y1="8.5" x2="14.5" y2="8.5" stroke="#a8a8a8"/><line x1="0.5" y1="11.5" x2="14.5" y2="11.5" stroke="#a8a8a8"/><line x1="4.5" y1="0.5" x2="4.5" y2="14.5" stroke="#a8a8a8"/><line x1="11.5" y1="0.5" x2="11.5" y2="14.5" stroke="#a8a8a8"/><rect x="4.5" y="4.5" width="7" height="3.5" fill="#d6ab57"/><rect x="0.5" y="0.5" width="14" height="14" fill="none" stroke="#858585"/></g></svg><div class="t" style="left:316.5px;top:395.71px;font-size:11.35px;line-height:11.35px;font-weight:400;color:#303030;"><u>G</u>érer les règles...</div><div style="position:absolute;left:595px;top:212px;width:131px;height:191px;background:#fcfcfc;box-sizing:border-box;border:1px solid #c8c8c8;box-shadow:1px 1px 2px rgba(0,0,0,0.12)"></div><div style="position:absolute;left:596px;top:214px;width:129px;height:21px;background:#dcdcdb"></div><div class="t" style="left:602.3px;top:220.21px;font-size:11.8px;line-height:11.8px;font-weight:700;color:#444;">Dégradé</div><div style="position:absolute;left:596px;top:295.5px;width:129px;height:21px;background:#dcdcdb"></div><div class="t" style="left:602px;top:300.20px;font-size:11.7px;line-height:11.7px;font-weight:700;color:#444;">Remplissage uni</div><svg style="position:absolute;left:601px;top:241px;" width="20" height="19" viewBox="0 0 20 19"><defs><linearGradient id="g0" x1="0" x2="1" y1="0" y2="0"><stop offset="0" stop-color="#2e5fa3"/><stop offset="0.25" stop-color="#2e5fa3"/><stop offset="1" stop-color="#2e5fa3" stop-opacity="0"/></linearGradient></defs><rect x="0.5" y="0.5" width="18" height="17.5" fill="#fff"/><rect x="4.5" y="0.5" width="4" height="3.5" fill="url(#g0)"/><line x1="11.5" y1="2.25" x2="13.5" y2="2.25" stroke="#555" stroke-width="0.9"/><rect x="4.5" y="4" width="10" height="3.5" fill="url(#g0)"/><rect x="4.5" y="7.5" width="2.5" height="3.5" fill="url(#g0)"/><line x1="11.5" y1="9.25" x2="13.5" y2="9.25" stroke="#555" stroke-width="0.9"/><rect x="4.5" y="11" width="6.3" height="3.5" fill="url(#g0)"/><line x1="11.5" y1="12.75" x2="13.5" y2="12.75" stroke="#555" stroke-width="0.9"/><rect x="4.5" y="14.5" width="9" height="3.5" fill="url(#g0)"/><line x1="0.5" y1="4" x2="4.5" y2="4" stroke="#aaa"/><line x1="14.5" y1="4" x2="18.5" y2="4" stroke="#aaa"/><line x1="0.5" y1="7.5" x2="4.5" y2="7.5" stroke="#aaa"/><line x1="14.5" y1="7.5" x2="18.5" y2="7.5" stroke="#aaa"/><line x1="0.5" y1="11" x2="4.5" y2="11" stroke="#aaa"/><line x1="14.5" y1="11" x2="18.5" y2="11" stroke="#aaa"/><line x1="0.5" y1="14.5" x2="4.5" y2="14.5" stroke="#aaa"/><line x1="14.5" y1="14.5" x2="18.5" y2="14.5" stroke="#aaa"/><line x1="4.5" y1="0.5" x2="4.5" y2="18.0" stroke="#999"/><line x1="14.5" y1="0.5" x2="14.5" y2="18.0" stroke="#999"/><rect x="0.5" y="0.5" width="18" height="17.5" fill="none" stroke="#858585"/></svg><svg style="position:absolute;left:630px;top:241px;" width="20" height="19" viewBox="0 0 20 19"><defs><linearGradient id="g1" x1="0" x2="1" y1="0" y2="0"><stop offset="0" stop-color="#3f9a5c"/><stop offset="0.25" stop-color="#3f9a5c"/><stop offset="1" stop-color="#3f9a5c" stop-opacity="0"/></linearGradient></defs><rect x="0.5" y="0.5" width="18" height="17.5" fill="#fff"/><rect x="4.5" y="0.5" width="4" height="3.5" fill="url(#g1)"/><line x1="11.5" y1="2.25" x2="13.5" y2="2.25" stroke="#555" stroke-width="0.9"/><rect x="4.5" y="4" width="10" height="3.5" fill="url(#g1)"/><rect x="4.5" y="7.5" width="2.5" height="3.5" fill="url(#g1)"/><line x1="11.5" y1="9.25" x2="13.5" y2="9.25" stroke="#555" stroke-width="0.9"/><rect x="4.5" y="11" width="6.3" height="3.5" fill="url(#g1)"/><line x1="11.5" y1="12.75" x2="13.5" y2="12.75" stroke="#555" stroke-width="0.9"/><rect x="4.5" y="14.5" width="9" height="3.5" fill="url(#g1)"/><line x1="0.5" y1="4" x2="4.5" y2="4" stroke="#aaa"/><line x1="14.5" y1="4" x2="18.5" y2="4" stroke="#aaa"/><line x1="0.5" y1="7.5" x2="4.5" y2="7.5" stroke="#aaa"/><line x1="14.5" y1="7.5" x2="18.5" y2="7.5" stroke="#aaa"/><line x1="0.5" y1="11" x2="4.5" y2="11" stroke="#aaa"/><line x1="14.5" y1="11" x2="18.5" y2="11" stroke="#aaa"/><line x1="0.5" y1="14.5" x2="4.5" y2="14.5" stroke="#aaa"/><line x1="14.5" y1="14.5" x2="18.5" y2="14.5" stroke="#aaa"/><line x1="4.5" y1="0.5" x2="4.5" y2="18.0" stroke="#999"/><line x1="14.5" y1="0.5" x2="14.5" y2="18.0" stroke="#999"/><rect x="0.5" y="0.5" width="18" height="17.5" fill="none" stroke="#858585"/></svg><svg style="position:absolute;left:660px;top:241px;" width="20" height="19" viewBox="0 0 20 19"><defs><linearGradient id="g2" x1="0" x2="1" y1="0" y2="0"><stop offset="0" stop-color="#e5464b"/><stop offset="0.25" stop-color="#e5464b"/><stop offset="1" stop-color="#e5464b" stop-opacity="0"/></linearGradient></defs><rect x="0.5" y="0.5" width="18" height="17.5" fill="#fff"/><rect x="4.5" y="0.5" width="4" height="3.5" fill="url(#g2)"/><line x1="11.5" y1="2.25" x2="13.5" y2="2.25" stroke="#555" stroke-width="0.9"/><rect x="4.5" y="4" width="10" height="3.5" fill="url(#g2)"/><rect x="4.5" y="7.5" width="2.5" height="3.5" fill="url(#g2)"/><line x1="11.5" y1="9.25" x2="13.5" y2="9.25" stroke="#555" stroke-width="0.9"/><rect x="4.5" y="11" width="6.3" height="3.5" fill="url(#g2)"/><line x1="11.5" y1="12.75" x2="13.5" y2="12.75" stroke="#555" stroke-width="0.9"/><rect x="4.5" y="14.5" width="9" height="3.5" fill="url(#g2)"/><line x1="0.5" y1="4" x2="4.5" y2="4" stroke="#aaa"/><line x1="14.5" y1="4" x2="18.5" y2="4" stroke="#aaa"/><line x1="0.5" y1="7.5" x2="4.5" y2="7.5" stroke="#aaa"/><line x1="14.5" y1="7.5" x2="18.5" y2="7.5" stroke="#aaa"/><line x1="0.5" y1="11" x2="4.5" y2="11" stroke="#aaa"/><line x1="14.5" y1="11" x2="18.5" y2="11" stroke="#aaa"/><line x1="0.5" y1="14.5" x2="4.5" y2="14.5" stroke="#aaa"/><line x1="14.5" y1="14.5" x2="18.5" y2="14.5" stroke="#aaa"/><line x1="4.5" y1="0.5" x2="4.5" y2="18.0" stroke="#999"/><line x1="14.5" y1="0.5" x2="14.5" y2="18.0" stroke="#999"/><rect x="0.5" y="0.5" width="18" height="17.5" fill="none" stroke="#858585"/></svg><svg style="position:absolute;left:601px;top:271px;" width="20" height="19" viewBox="0 0 20 19"><defs><linearGradient id="g3" x1="0" x2="1" y1="0" y2="0"><stop offset="0" stop-color="#e9a21a"/><stop offset="0.25" stop-color="#e9a21a"/><stop offset="1" stop-color="#e9a21a" stop-opacity="0"/></linearGradient></defs><rect x="0.5" y="0.5" width="18" height="17.5" fill="#fff"/><rect x="4.5" y="0.5" width="4" height="3.5" fill="url(#g3)"/><line x1="11.5" y1="2.25" x2="13.5" y2="2.25" stroke="#555" stroke-width="0.9"/><rect x="4.5" y="4" width="10" height="3.5" fill="url(#g3)"/><rect x="4.5" y="7.5" width="2.5" height="3.5" fill="url(#g3)"/><line x1="11.5" y1="9.25" x2="13.5" y2="9.25" stroke="#555" stroke-width="0.9"/><rect x="4.5" y="11" width="6.3" height="3.5" fill="url(#g3)"/><line x1="11.5" y1="12.75" x2="13.5" y2="12.75" stroke="#555" stroke-width="0.9"/><rect x="4.5" y="14.5" width="9" height="3.5" fill="url(#g3)"/><line x1="0.5" y1="4" x2="4.5" y2="4" stroke="#aaa"/><line x1="14.5" y1="4" x2="18.5" y2="4" stroke="#aaa"/><line x1="0.5" y1="7.5" x2="4.5" y2="7.5" stroke="#aaa"/><line x1="14.5" y1="7.5" x2="18.5" y2="7.5" stroke="#aaa"/><line x1="0.5" y1="11" x2="4.5" y2="11" stroke="#aaa"/><line x1="14.5" y1="11" x2="18.5" y2="11" stroke="#aaa"/><line x1="0.5" y1="14.5" x2="4.5" y2="14.5" stroke="#aaa"/><line x1="14.5" y1="14.5" x2="18.5" y2="14.5" stroke="#aaa"/><line x1="4.5" y1="0.5" x2="4.5" y2="18.0" stroke="#999"/><line x1="14.5" y1="0.5" x2="14.5" y2="18.0" stroke="#999"/><rect x="0.5" y="0.5" width="18" height="17.5" fill="none" stroke="#858585"/></svg><svg style="position:absolute;left:630px;top:271px;" width="20" height="19" viewBox="0 0 20 19"><defs><linearGradient id="g4" x1="0" x2="1" y1="0" y2="0"><stop offset="0" stop-color="#1577d6"/><stop offset="0.25" stop-color="#1577d6"/><stop offset="1" stop-color="#1577d6" stop-opacity="0"/></linearGradient></defs><rect x="0.5" y="0.5" width="18" height="17.5" fill="#fff"/><rect x="4.5" y="0.5" width="4" height="3.5" fill="url(#g4)"/><line x1="11.5" y1="2.25" x2="13.5" y2="2.25" stroke="#555" stroke-width="0.9"/><rect x="4.5" y="4" width="10" height="3.5" fill="url(#g4)"/><rect x="4.5" y="7.5" width="2.5" height="3.5" fill="url(#g4)"/><line x1="11.5" y1="9.25" x2="13.5" y2="9.25" stroke="#555" stroke-width="0.9"/><rect x="4.5" y="11" width="6.3" height="3.5" fill="url(#g4)"/><line x1="11.5" y1="12.75" x2="13.5" y2="12.75" stroke="#555" stroke-width="0.9"/><rect x="4.5" y="14.5" width="9" height="3.5" fill="url(#g4)"/><line x1="0.5" y1="4" x2="4.5" y2="4" stroke="#aaa"/><line x1="14.5" y1="4" x2="18.5" y2="4" stroke="#aaa"/><line x1="0.5" y1="7.5" x2="4.5" y2="7.5" stroke="#aaa"/><line x1="14.5" y1="7.5" x2="18.5" y2="7.5" stroke="#aaa"/><line x1="0.5" y1="11" x2="4.5" y2="11" stroke="#aaa"/><line x1="14.5" y1="11" x2="18.5" y2="11" stroke="#aaa"/><line x1="0.5" y1="14.5" x2="4.5" y2="14.5" stroke="#aaa"/><line x1="14.5" y1="14.5" x2="18.5" y2="14.5" stroke="#aaa"/><line x1="4.5" y1="0.5" x2="4.5" y2="18.0" stroke="#999"/><line x1="14.5" y1="0.5" x2="14.5" y2="18.0" stroke="#999"/><rect x="0.5" y="0.5" width="18" height="17.5" fill="none" stroke="#858585"/></svg><svg style="position:absolute;left:660px;top:271px;" width="20" height="19" viewBox="0 0 20 19"><defs><linearGradient id="g5" x1="0" x2="1" y1="0" y2="0"><stop offset="0" stop-color="#c7157f"/><stop offset="0.25" stop-color="#c7157f"/><stop offset="1" stop-color="#c7157f" stop-opacity="0"/></linearGradient></defs><rect x="0.5" y="0.5" width="18" height="17.5" fill="#fff"/><rect x="4.5" y="0.5" width="4" height="3.5" fill="url(#g5)"/><line x1="11.5" y1="2.25" x2="13.5" y2="2.25" stroke="#555" stroke-width="0.9"/><rect x="4.5" y="4" width="10" height="3.5" fill="url(#g5)"/><rect x="4.5" y="7.5" width="2.5" height="3.5" fill="url(#g5)"/><line x1="11.5" y1="9.25" x2="13.5" y2="9.25" stroke="#555" stroke-width="0.9"/><rect x="4.5" y="11" width="6.3" height="3.5" fill="url(#g5)"/><line x1="11.5" y1="12.75" x2="13.5" y2="12.75" stroke="#555" stroke-width="0.9"/><rect x="4.5" y="14.5" width="9" height="3.5" fill="url(#g5)"/><line x1="0.5" y1="4" x2="4.5" y2="4" stroke="#aaa"/><line x1="14.5" y1="4" x2="18.5" y2="4" stroke="#aaa"/><line x1="0.5" y1="7.5" x2="4.5" y2="7.5" stroke="#aaa"/><line x1="14.5" y1="7.5" x2="18.5" y2="7.5" stroke="#aaa"/><line x1="0.5" y1="11" x2="4.5" y2="11" stroke="#aaa"/><line x1="14.5" y1="11" x2="18.5" y2="11" stroke="#aaa"/><line x1="0.5" y1="14.5" x2="4.5" y2="14.5" stroke="#aaa"/><line x1="14.5" y1="14.5" x2="18.5" y2="14.5" stroke="#aaa"/><line x1="4.5" y1="0.5" x2="4.5" y2="18.0" stroke="#999"/><line x1="14.5" y1="0.5" x2="14.5" y2="18.0" stroke="#999"/><rect x="0.5" y="0.5" width="18" height="17.5" fill="none" stroke="#858585"/></svg><svg style="position:absolute;left:601px;top:322px;" width="20" height="19" viewBox="0 0 20 19"><rect x="0.5" y="0.5" width="18" height="17.5" fill="#fff"/><rect x="4.5" y="0.5" width="4" height="3.5" fill="#2e5fa3"/><line x1="11.5" y1="2.25" x2="13.5" y2="2.25" stroke="#555" stroke-width="0.9"/><rect x="4.5" y="4" width="10" height="3.5" fill="#2e5fa3"/><rect x="4.5" y="7.5" width="2.5" height="3.5" fill="#2e5fa3"/><line x1="11.5" y1="9.25" x2="13.5" y2="9.25" stroke="#555" stroke-width="0.9"/><rect x="4.5" y="11" width="6.3" height="3.5" fill="#2e5fa3"/><line x1="11.5" y1="12.75" x2="13.5" y2="12.75" stroke="#555" stroke-width="0.9"/><rect x="4.5" y="14.5" width="9" height="3.5" fill="#2e5fa3"/><line x1="0.5" y1="4" x2="4.5" y2="4" stroke="#aaa"/><line x1="14.5" y1="4" x2="18.5" y2="4" stroke="#aaa"/><line x1="0.5" y1="7.5" x2="4.5" y2="7.5" stroke="#aaa"/><line x1="14.5" y1="7.5" x2="18.5" y2="7.5" stroke="#aaa"/><line x1="0.5" y1="11" x2="4.5" y2="11" stroke="#aaa"/><line x1="14.5" y1="11" x2="18.5" y2="11" stroke="#aaa"/><line x1="0.5" y1="14.5" x2="4.5" y2="14.5" stroke="#aaa"/><line x1="14.5" y1="14.5" x2="18.5" y2="14.5" stroke="#aaa"/><line x1="4.5" y1="0.5" x2="4.5" y2="18.0" stroke="#999"/><line x1="14.5" y1="0.5" x2="14.5" y2="18.0" stroke="#999"/><rect x="0.5" y="0.5" width="18" height="17.5" fill="none" stroke="#858585"/></svg><svg style="position:absolute;left:630px;top:322px;" width="20" height="19" viewBox="0 0 20 19"><rect x="0.5" y="0.5" width="18" height="17.5" fill="#fff"/><rect x="4.5" y="0.5" width="4" height="3.5" fill="#3f9a5c"/><line x1="11.5" y1="2.25" x2="13.5" y2="2.25" stroke="#555" stroke-width="0.9"/><rect x="4.5" y="4" width="10" height="3.5" fill="#3f9a5c"/><rect x="4.5" y="7.5" width="2.5" height="3.5" fill="#3f9a5c"/><line x1="11.5" y1="9.25" x2="13.5" y2="9.25" stroke="#555" stroke-width="0.9"/><rect x="4.5" y="11" width="6.3" height="3.5" fill="#3f9a5c"/><line x1="11.5" y1="12.75" x2="13.5" y2="12.75" stroke="#555" stroke-width="0.9"/><rect x="4.5" y="14.5" width="9" height="3.5" fill="#3f9a5c"/><line x1="0.5" y1="4" x2="4.5" y2="4" stroke="#aaa"/><line x1="14.5" y1="4" x2="18.5" y2="4" stroke="#aaa"/><line x1="0.5" y1="7.5" x2="4.5" y2="7.5" stroke="#aaa"/><line x1="14.5" y1="7.5" x2="18.5" y2="7.5" stroke="#aaa"/><line x1="0.5" y1="11" x2="4.5" y2="11" stroke="#aaa"/><line x1="14.5" y1="11" x2="18.5" y2="11" stroke="#aaa"/><line x1="0.5" y1="14.5" x2="4.5" y2="14.5" stroke="#aaa"/><line x1="14.5" y1="14.5" x2="18.5" y2="14.5" stroke="#aaa"/><line x1="4.5" y1="0.5" x2="4.5" y2="18.0" stroke="#999"/><line x1="14.5" y1="0.5" x2="14.5" y2="18.0" stroke="#999"/><rect x="0.5" y="0.5" width="18" height="17.5" fill="none" stroke="#858585"/></svg><svg style="position:absolute;left:660px;top:322px;" width="20" height="19" viewBox="0 0 20 19"><rect x="0.5" y="0.5" width="18" height="17.5" fill="#fff"/><rect x="4.5" y="0.5" width="4" height="3.5" fill="#e5464b"/><line x1="11.5" y1="2.25" x2="13.5" y2="2.25" stroke="#555" stroke-width="0.9"/><rect x="4.5" y="4" width="10" height="3.5" fill="#e5464b"/><rect x="4.5" y="7.5" width="2.5" height="3.5" fill="#e5464b"/><line x1="11.5" y1="9.25" x2="13.5" y2="9.25" stroke="#555" stroke-width="0.9"/><rect x="4.5" y="11" width="6.3" height="3.5" fill="#e5464b"/><line x1="11.5" y1="12.75" x2="13.5" y2="12.75" stroke="#555" stroke-width="0.9"/><rect x="4.5" y="14.5" width="9" height="3.5" fill="#e5464b"/><line x1="0.5" y1="4" x2="4.5" y2="4" stroke="#aaa"/><line x1="14.5" y1="4" x2="18.5" y2="4" stroke="#aaa"/><line x1="0.5" y1="7.5" x2="4.5" y2="7.5" stroke="#aaa"/><line x1="14.5" y1="7.5" x2="18.5" y2="7.5" stroke="#aaa"/><line x1="0.5" y1="11" x2="4.5" y2="11" stroke="#aaa"/><line x1="14.5" y1="11" x2="18.5" y2="11" stroke="#aaa"/><line x1="0.5" y1="14.5" x2="4.5" y2="14.5" stroke="#aaa"/><line x1="14.5" y1="14.5" x2="18.5" y2="14.5" stroke="#aaa"/><line x1="4.5" y1="0.5" x2="4.5" y2="18.0" stroke="#999"/><line x1="14.5" y1="0.5" x2="14.5" y2="18.0" stroke="#999"/><rect x="0.5" y="0.5" width="18" height="17.5" fill="none" stroke="#858585"/></svg><svg style="position:absolute;left:601px;top:352px;" width="20" height="19" viewBox="0 0 20 19"><rect x="0.5" y="0.5" width="18" height="17.5" fill="#fff"/><rect x="4.5" y="0.5" width="4" height="3.5" fill="#e9a21a"/><line x1="11.5" y1="2.25" x2="13.5" y2="2.25" stroke="#555" stroke-width="0.9"/><rect x="4.5" y="4" width="10" height="3.5" fill="#e9a21a"/><rect x="4.5" y="7.5" width="2.5" height="3.5" fill="#e9a21a"/><line x1="11.5" y1="9.25" x2="13.5" y2="9.25" stroke="#555" stroke-width="0.9"/><rect x="4.5" y="11" width="6.3" height="3.5" fill="#e9a21a"/><line x1="11.5" y1="12.75" x2="13.5" y2="12.75" stroke="#555" stroke-width="0.9"/><rect x="4.5" y="14.5" width="9" height="3.5" fill="#e9a21a"/><line x1="0.5" y1="4" x2="4.5" y2="4" stroke="#aaa"/><line x1="14.5" y1="4" x2="18.5" y2="4" stroke="#aaa"/><line x1="0.5" y1="7.5" x2="4.5" y2="7.5" stroke="#aaa"/><line x1="14.5" y1="7.5" x2="18.5" y2="7.5" stroke="#aaa"/><line x1="0.5" y1="11" x2="4.5" y2="11" stroke="#aaa"/><line x1="14.5" y1="11" x2="18.5" y2="11" stroke="#aaa"/><line x1="0.5" y1="14.5" x2="4.5" y2="14.5" stroke="#aaa"/><line x1="14.5" y1="14.5" x2="18.5" y2="14.5" stroke="#aaa"/><line x1="4.5" y1="0.5" x2="4.5" y2="18.0" stroke="#999"/><line x1="14.5" y1="0.5" x2="14.5" y2="18.0" stroke="#999"/><rect x="0.5" y="0.5" width="18" height="17.5" fill="none" stroke="#858585"/></svg><svg style="position:absolute;left:630px;top:352px;" width="20" height="19" viewBox="0 0 20 19"><rect x="0.5" y="0.5" width="18" height="17.5" fill="#fff"/><rect x="4.5" y="0.5" width="4" height="3.5" fill="#1577d6"/><line x1="11.5" y1="2.25" x2="13.5" y2="2.25" stroke="#555" stroke-width="0.9"/><rect x="4.5" y="4" width="10" height="3.5" fill="#1577d6"/><rect x="4.5" y="7.5" width="2.5" height="3.5" fill="#1577d6"/><line x1="11.5" y1="9.25" x2="13.5" y2="9.25" stroke="#555" stroke-width="0.9"/><rect x="4.5" y="11" width="6.3" height="3.5" fill="#1577d6"/><line x1="11.5" y1="12.75" x2="13.5" y2="12.75" stroke="#555" stroke-width="0.9"/><rect x="4.5" y="14.5" width="9" height="3.5" fill="#1577d6"/><line x1="0.5" y1="4" x2="4.5" y2="4" stroke="#aaa"/><line x1="14.5" y1="4" x2="18.5" y2="4" stroke="#aaa"/><line x1="0.5" y1="7.5" x2="4.5" y2="7.5" stroke="#aaa"/><line x1="14.5" y1="7.5" x2="18.5" y2="7.5" stroke="#aaa"/><line x1="0.5" y1="11" x2="4.5" y2="11" stroke="#aaa"/><line x1="14.5" y1="11" x2="18.5" y2="11" stroke="#aaa"/><line x1="0.5" y1="14.5" x2="4.5" y2="14.5" stroke="#aaa"/><line x1="14.5" y1="14.5" x2="18.5" y2="14.5" stroke="#aaa"/><line x1="4.5" y1="0.5" x2="4.5" y2="18.0" stroke="#999"/><line x1="14.5" y1="0.5" x2="14.5" y2="18.0" stroke="#999"/><rect x="0.5" y="0.5" width="18" height="17.5" fill="none" stroke="#858585"/></svg><svg style="position:absolute;left:660px;top:352px;" width="20" height="19" viewBox="0 0 20 19"><rect x="0.5" y="0.5" width="18" height="17.5" fill="#fff"/><rect x="4.5" y="0.5" width="4" height="3.5" fill="#c7157f"/><line x1="11.5" y1="2.25" x2="13.5" y2="2.25" stroke="#555" stroke-width="0.9"/><rect x="4.5" y="4" width="10" height="3.5" fill="#c7157f"/><rect x="4.5" y="7.5" width="2.5" height="3.5" fill="#c7157f"/><line x1="11.5" y1="9.25" x2="13.5" y2="9.25" stroke="#555" stroke-width="0.9"/><rect x="4.5" y="11" width="6.3" height="3.5" fill="#c7157f"/><line x1="11.5" y1="12.75" x2="13.5" y2="12.75" stroke="#555" stroke-width="0.9"/><rect x="4.5" y="14.5" width="9" height="3.5" fill="#c7157f"/><line x1="0.5" y1="4" x2="4.5" y2="4" stroke="#aaa"/><line x1="14.5" y1="4" x2="18.5" y2="4" stroke="#aaa"/><line x1="0.5" y1="7.5" x2="4.5" y2="7.5" stroke="#aaa"/><line x1="14.5" y1="7.5" x2="18.5" y2="7.5" stroke="#aaa"/><line x1="0.5" y1="11" x2="4.5" y2="11" stroke="#aaa"/><line x1="14.5" y1="11" x2="18.5" y2="11" stroke="#aaa"/><line x1="0.5" y1="14.5" x2="4.5" y2="14.5" stroke="#aaa"/><line x1="14.5" y1="14.5" x2="18.5" y2="14.5" stroke="#aaa"/><line x1="4.5" y1="0.5" x2="4.5" y2="18.0" stroke="#999"/><line x1="14.5" y1="0.5" x2="14.5" y2="18.0" stroke="#999"/><rect x="0.5" y="0.5" width="18" height="17.5" fill="none" stroke="#858585"/></svg><div style="position:absolute;left:596px;top:376px;width:129px;height:1px;background:#e0e0e0"></div><div class="t" style="left:623.6px;top:385.20px;font-size:11.5px;line-height:11.5px;font-weight:400;color:#303030;"><u>A</u>utres règles...</div><svg style="position:absolute;left:528.5px;top:236.5px;" width="15" height="21" viewBox="0 0 15 21"><path d="M1 1v15.3l3.5-3.2l2.6 5.9l2.4-1l-2.5-5.7h5.2z" fill="#fff" stroke="#333" stroke-width="1.1" stroke-linejoin="round"/></svg></body></html>
